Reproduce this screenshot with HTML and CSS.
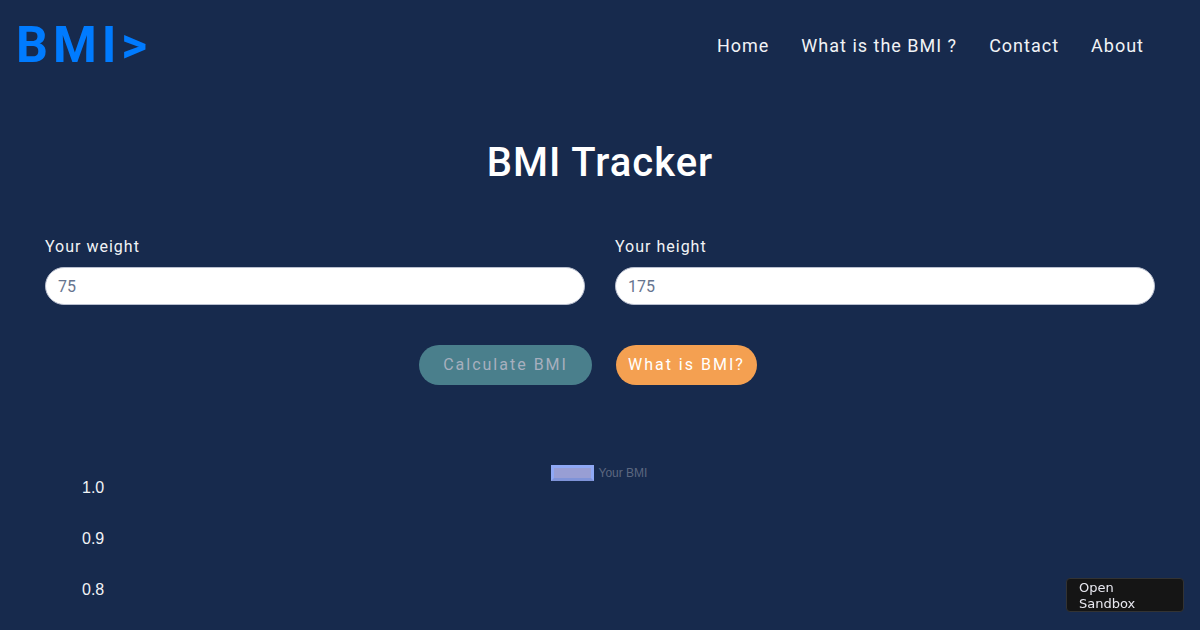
FILE: index.html
```html
<!DOCTYPE html>
<html lang="en">

<head>
    <meta charset="UTF-8">
    <title>BMI Tracker</title>
    <link rel="stylesheet" href="styles.css">
</head>

<body>
    <nav class="topbar">
        <a class="logo" href="#">BMI<span class="logo-arrow">&gt;</span></a>
        <ul class="links">
            <li><a href="#">Home</a></li>
            <li><a href="#">What is the BMI ?</a></li>
            <li><a href="#">Contact</a></li>
            <li><a href="#">About</a></li>
        </ul>
    </nav>

    <h1>BMI Tracker</h1>

    <section class="fields">
        <div class="field">
            <label for="weight">Your weight</label>
            <input id="weight" type="text" placeholder="75">
        </div>
        <div class="field">
            <label for="height">Your height</label>
            <input id="height" type="text" placeholder="175">
        </div>
    </section>

    <div class="actions">
        <button class="calc" disabled>Calculate BMI</button>
        <button class="info">What is BMI?</button>
    </div>

    <section class="chart">
        <div class="legend">
            <span class="swatch"></span>
            <span>Your BMI</span>
        </div>
        <ul class="ticks">
            <li>1.0</li>
            <li>0.9</li>
            <li>0.8</li>
        </ul>
    </section>

    <a class="sandbox" href="#">Open Sandbox</a>
</body>

</html>
```

FILE: styles.css
```css
html,
body {
    height: 630px;
    overflow: hidden;
}

body {
    margin: 0;
    background-color: #172a4d;
    color: #fff;
    font-family: Roboto, sans-serif;
}

a {
    color: inherit;
    text-decoration: none;
}

ul {
    list-style: none;
    margin: 0;
    padding: 0;
}

.topbar {
    display: flex;
    justify-content: space-between;
    align-items: center;
    height: 90px;
    padding: 0 40px 0 16px;
}

.logo {
    display: flex;
    align-items: center;
    color: #007bff;
    font-size: 50px;
    font-weight: 700;
    letter-spacing: 5px;
}

.logo-arrow {
    font-size: 50px;
    letter-spacing: 0;
}

.links {
    display: flex;
    gap: 32px;
    color: #f1f3f6;
    font-size: 18px;
    letter-spacing: 1px;
    padding-right: 16px;
}

h1 {
    margin: 48px 0 0;
    text-align: center;
    font-size: 40px;
    font-weight: 500;
    line-height: 50px;
    letter-spacing: 1px;
}

.fields {
    display: grid;
    grid-template-columns: 1fr 1fr;
    gap: 30px;
    margin-top: 48px;
    padding: 0 45px;
}

.field label {
    display: block;
    margin-bottom: 9px;
    color: #f1f3f6;
    font-size: 16px;
    line-height: 22px;
    letter-spacing: 1px;
}

.field input {
    display: block;
    box-sizing: border-box;
    width: 100%;
    height: 38px;
    padding: 0 12px 0;
    border: 1px solid #b9bfcf;
    border-radius: 19px;
    background-color: #fff;
    font-family: Roboto, sans-serif;
    font-size: 16px;
}

.field input::placeholder {
    color: #66748f;
    opacity: 1;
}

.actions {
    display: flex;
    justify-content: center;
    gap: 24px;
    margin-top: 40px;
    padding-right: 24px;
}

.actions button {
    height: 40px;
    padding-bottom: 2px;
    border: none;
    border-radius: 20px;
    font-family: Roboto, sans-serif;
    font-size: 16px;
    letter-spacing: 2px;
}

.calc {
    padding: 0 24px;
    background-color: #4a7f8c;
    color: #a7afbe;
}

.info {
    padding: 0 12px;
    background-color: #f4a051;
    color: #fff;
}

.chart {
    padding: 80px 0 0 82px;
}

.legend {
    display: flex;
    justify-content: center;
    align-items: center;
    gap: 5px;
    height: 16px;
    margin-left: -84px;
    color: #5c6780;
    font-family: "Liberation Sans", sans-serif;
    font-size: 12px;
}

.swatch {
    box-sizing: border-box;
    width: 43px;
    height: 16px;
    border: 3px solid #8fa8f5;
    border-bottom-color: #7f93d8;
    background-color: #989ed4;
}

.ticks {
    margin-top: -3px;
    color: #f1f3f6;
    font-family: "Liberation Sans", sans-serif;
    font-size: 16px;
}

.ticks li {
    height: 51px;
    line-height: 20px;
}

.sandbox {
    position: fixed;
    right: 16px;
    bottom: 18px;
    box-sizing: border-box;
    width: 118px;
    height: 34px;
    padding: 1px 12px;
    border: 1px solid #333;
    border-radius: 4px;
    background-color: #151515;
    color: #e8e8f0;
    font-family: "DejaVu Sans", sans-serif;
    font-size: 13px;
    line-height: 16px;
}
```
